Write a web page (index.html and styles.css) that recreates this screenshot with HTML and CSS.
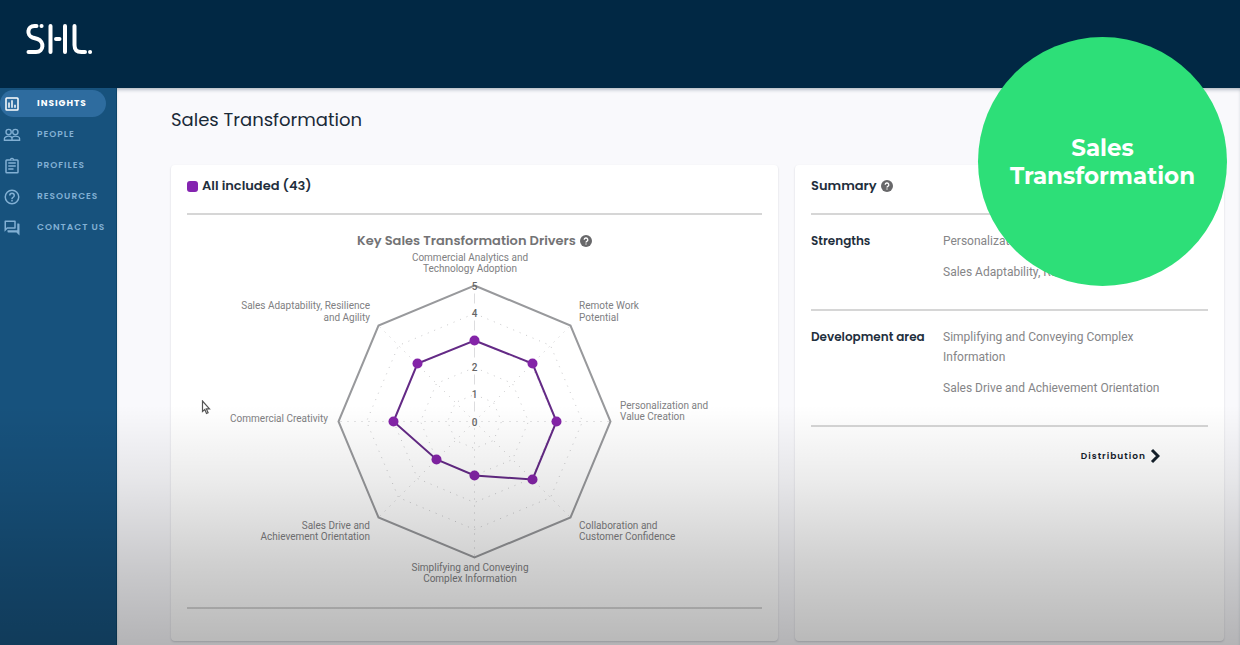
FILE: index.html
```html
<!DOCTYPE html>
<html lang="en">

<head>
    <meta charset="UTF-8">
    <meta name="viewport" content="width=device-width, initial-scale=1.0">
    <title>Sales Transformation</title>
    <link rel="stylesheet" href="styles.css">
</head>

<body>
    <header class="topbar">
        <a href="#" class="logo" aria-label="SHL">
            <svg width="68" height="30" viewBox="0 0 68 30">
                <g fill="none" stroke="#fff" stroke-width="4" stroke-linecap="round" stroke-linejoin="round">
                    <path d="M11.500 2H9.500C2 2 1.500 11.500 7.500 13.500l5 1.500C19.500 17.500 19 28 11 28H3.500M16.500 2h.1" />
                    <path d="M25.500 2v26M40 2v26M31 15h3.500M49.500 2v19c0 5 2 7 7 7h3.500M65 28h.1" />
                </g>
            </svg>
        </a>
    </header>

    <div class="layout">
        <!-- Side menu -->
        <nav class="sidebar">
            <a href="#" class="nav-item active">
                <svg class="icon" viewBox="0 0 24 24"><path d="M9 17H7v-7h2v7zm4 0h-2V7h2v10zm4 0h-2v-4h2v4zm2 2H5V5h14v14zm0-16H5a2 2 0 0 0-2 2v14a2 2 0 0 0 2 2h14a2 2 0 0 0 2-2V5a2 2 0 0 0-2-2z" /></svg>
                Insights
            </a>
            <a href="#" class="nav-item">
                <svg class="icon" viewBox="0 0 24 24"><g fill="none" stroke="currentColor" stroke-width="1.800"><circle cx="7.500" cy="8" r="3.500" /><circle cx="16.500" cy="8" r="3.500" /><path d="M1.900 19v-2.200c0-2 3-3.300 5.600-3.300s4.500 1.300 4.500 3.300V19zM12 16.800c0-2 2-3.300 4.500-3.300s5.600 1.300 5.600 3.300V19H12" /></g></svg>
                People
            </a>
            <a href="#" class="nav-item">
                <svg class="icon" viewBox="0 0 24 24"><path d="M7 15h7v2H7zm0-4h10v2H7zm0-4h10v2H7zm12-4h-4.200a3 3 0 0 0-5.600 0H5a2 2 0 0 0-2 2v15a2 2 0 0 0 2 2h14a2 2 0 0 0 2-2V5a2 2 0 0 0-2-2zm-7-.3a.8.8 0 1 1 0 1.600.8.8 0 0 1 0-1.600zM19 20H5V5h14v15z" /></svg>
                Profiles
            </a>
            <a href="#" class="nav-item">
                <svg class="icon" viewBox="0 0 24 24"><path d="M11 18h2v-2h-2v2zm1-16a10 10 0 1 0 0 20 10 10 0 0 0 0-20zm0 18a8 8 0 1 1 0-16 8 8 0 0 1 0 16zm0-14a4 4 0 0 0-4 4h2a2 2 0 1 1 4 0c0 2-3 1.750-3 5h2c0-2.250 3-2.500 3-5a4 4 0 0 0-4-4z" /></svg>
                Resources
            </a>
            <a href="#" class="nav-item">
                <svg class="icon" viewBox="0 0 24 24"><path d="M15 4v7H5.170L4 12.170V4h11m1-2H3a1 1 0 0 0-1 1v14l4-4h10a1 1 0 0 0 1-1V3a1 1 0 0 0-1-1zm5 4h-2v9H6v2a1 1 0 0 0 1 1h11l4 4V7a1 1 0 0 0-1-1z" /></svg>
                Contact us
            </a>
        </nav>

        <main class="content">
            <h1>Sales Transformation</h1>

            <div class="cards">
                <!-- Radar chart -->
                <section class="card">
                    <h2 class="card-head"><span class="swatch"></span>All included (43)</h2>
                    <div class="chart">
                        <h3>Key Sales Transformation Drivers
                            <svg class="help" viewBox="0 0 12 12"><circle cx="6" cy="6" r="6" /><path d="M4.200 4.800a1.800 1.800 0 1 1 2.600 1.600q-.8.400-.8 1M6 8.600v1" /></svg>
                        </h3>
                        <svg class="radar" viewBox="0 0 575 340" role="img" aria-label="Key Sales Transformation Drivers">
                            <g transform="translate(287.500 171.500)">
                                <g class="grid">
                                    <path d="M0-27 19-19 27 0 19 19 0 27-19 19-27 0-19-19Z" />
                                    <path d="M0-54 38-38 54 0 38 38 0 54-38 38-54 0-38-38Z" />
                                    <path d="M0-81 57-57 81 0 57 57 0 81-57 57-81 0-57-57Z" />
                                    <path d="M0-108 76-76 108 0 76 76 0 108-76 76-108 0-76-76Z" />
                                    <path d="M0 0V135M0 0H135M0 0H-135M0 0 96 96M0 0-96 96M0 0 96-96M0 0-96-96" />
                                </g>
                                <path class="axis" d="M0-10V-20M0-37V-47M0-64V-74M0-91V-101M0-118V-128" />
                                <path class="outline" d="M0-136 96-96 136 0 96 96 0 136-96 96-136 0-96-96Z" />
                                <g class="ticks">
                                    <text y="-132">5</text>
                                    <text y="-105">4</text>
                                    <text y="-51">2</text>
                                    <text y="-24">1</text>
                                    <text y="4">0</text>
                                </g>
                                <path class="series" d="M0-81 58-58 82 0 58 58 0 54-38 38-81 0-57-58Z" />
                                <g class="dots">
                                    <circle cy="-81" r="5" />
                                    <circle cx="58" cy="-58" r="5" />
                                    <circle cx="82" r="5" />
                                    <circle cx="58" cy="58" r="5" />
                                    <circle cy="54" r="5" />
                                    <circle cx="-38" cy="38" r="5" />
                                    <circle cx="-81" r="5" />
                                    <circle cx="-57" cy="-58" r="5" />
                                </g>
                            </g>
                            <g class="labels">
                                <text class="mid"><tspan x="283" y="11">Commercial Analytics and</tspan><tspan x="283" y="22">Technology Adoption</tspan></text>
                                <text><tspan x="392" y="59">Remote Work</tspan><tspan x="392" y="71">Potential</tspan></text>
                                <text><tspan x="433" y="159">Personalization and</tspan><tspan x="433" y="170">Value Creation</tspan></text>
                                <text><tspan x="392" y="279">Collaboration and</tspan><tspan x="392" y="290">Customer Confidence</tspan></text>
                                <text class="mid"><tspan x="283" y="321">Simplifying and Conveying</tspan><tspan x="283" y="332">Complex Information</tspan></text>
                                <text class="end"><tspan x="183" y="279">Sales Drive and</tspan><tspan x="183" y="290">Achievement Orientation</tspan></text>
                                <text class="end" x="141" y="172">Commercial Creativity</text>
                                <text class="end"><tspan x="183" y="59">Sales Adaptability, Resilience</tspan><tspan x="183" y="71">and Agility</tspan></text>
                            </g>
                        </svg>
                    </div>
                </section>

                <!-- Summary -->
                <section class="card">
                    <h2 class="card-head">Summary
                        <svg class="help" viewBox="0 0 12 12"><circle cx="6" cy="6" r="6" /><path d="M4.200 4.800a1.800 1.800 0 1 1 2.600 1.600q-.8.400-.8 1M6 8.600v1" /></svg>
                    </h2>
                    <div class="row">
                        <h4>Strengths</h4>
                        <ul>
                            <li>Personalization and Value Creation</li>
                            <li>Sales Adaptability, Resilience</li>
                        </ul>
                    </div>
                    <div class="row">
                        <h4>Development area</h4>
                        <ul>
                            <li>Simplifying and Conveying Complex Information</li>
                            <li>Sales Drive and Achievement Orientation</li>
                        </ul>
                    </div>
                    <a href="#" class="more">Distribution
                        <svg width="10" height="16" viewBox="0 0 10 16"><path d="M2 2l6 6-6 6" fill="none" stroke="#14202b" stroke-width="3" /></svg>
                    </a>
                </section>
            </div>
        </main>
    </div>

    <div class="shade"></div>
    <div class="bubble">Sales<br>Transformation</div>
    <svg class="cursor" width="10" height="15" viewBox="0 0 10 15"><path d="M1.500 1v10.500l2.300-2 1.700 4 1.600-.7-1.700-3.900h3.100z" fill="#fff" stroke="#555" stroke-width="1.200" /></svg>
</body>

</html>
```
FILE: styles.css
```css
* {
    box-sizing: border-box;
}

body {
    margin: 0;
    min-height: 100vh;
    display: flex;
    flex-direction: column;
    position: relative;
    font-family: Roboto, sans-serif;
    font-size: 12px;
    color: #858587;
    background: #f9f9fc;
}

h1,
h2,
h3,
h4,
ul {
    margin: 0;
    padding: 0;
    font-family: Poppins, Inter, sans-serif;
}

a {
    color: inherit;
    text-decoration: none;
}

.topbar {
    height: 88px;
    padding: 24px 25px;
    background: #012844;
}

.logo svg {
    display: block;
}

.layout {
    flex: 1;
    display: flex;
}

/* Side menu */
.sidebar {
    width: 117px;
    padding-top: 2px;
    display: flex;
    flex-direction: column;
    gap: 4px;
    background: #17527d;
    border-right: 1px solid #0d4569;
}

.nav-item {
    display: flex;
    align-items: center;
    gap: 16px;
    width: 106px;
    height: 27px;
    padding-left: 3px;
    border-radius: 14px;
    font: 600 9px Poppins, Inter, sans-serif;
    letter-spacing: 1px;
    text-transform: uppercase;
    white-space: nowrap;
    color: #82b0d4;
}

.nav-item.active {
    background: #2e6c9f;
    font-weight: 700;
    color: #fff;
}

.icon {
    width: 18px;
    height: 18px;
    flex: none;
    fill: currentColor;
}

/* Content */
.content {
    flex: 1;
    display: flex;
    flex-direction: column;
    padding: 18px 16px 4px 54px;
    box-shadow: inset 0 3px 4px -2px #9aa3ae;
}

h1 {
    margin-bottom: 31px;
    font-size: 18px;
    line-height: 28px;
    font-weight: 400;
    color: #1a2a38;
}

.cards {
    flex: 1;
    display: grid;
    grid-template-columns: 607fr 429fr;
    gap: 17px;
}

.card {
    padding: 0 16px;
    background: #fff;
    border-radius: 4px;
    box-shadow: 0 1px 2px rgba(40, 50, 70, .2);
}

.card-head {
    display: flex;
    align-items: center;
    gap: 4px;
    height: 50px;
    padding-bottom: 6px;
    border-bottom: 2px solid #d6d6d6;
    font-size: 13px;
    font-weight: 600;
    color: #1f2f3d;
}

.swatch {
    width: 11px;
    height: 11px;
    border-radius: 3px;
    background: #8424b0;
}

.help {
    width: 12px;
    height: 12px;
    fill: #68686a;
}

.help path {
    fill: none;
    stroke: #fff;
    stroke-width: 1.3;
}

.chart {
    padding-bottom: 17px;
    border-bottom: 2px solid #d6d6d6;
}

h3 {
    display: flex;
    justify-content: center;
    align-items: center;
    gap: 4px;
    height: 35px;
    padding-top: 17px;
    font-size: 13px;
    font-weight: 600;
    color: #737375;
}

.radar {
    display: block;
    width: 100%;
}

.grid {
    fill: none;
    stroke: #c9c9cb;
    stroke-dasharray: 1 6;
}

.axis {
    stroke: #dcdcde;
}

.outline {
    fill: none;
    stroke: #98999c;
    stroke-width: 2;
}

.ticks {
    font-size: 10px;
    font-weight: 500;
    text-anchor: middle;
    fill: #666;
}

.series {
    fill: none;
    stroke: #642a86;
    stroke-width: 2;
}

.dots {
    fill: #8424a8;
}

.labels {
    font-size: 10px;
    fill: #808082;
}

.mid {
    text-anchor: middle;
}

.end {
    text-anchor: end;
}

/* Summary */
.row {
    display: flex;
    padding: 16px 32px 27px 0;
    border-bottom: 2px solid #d6d6d6;
    line-height: 20px;
}

.row h4 {
    width: 132px;
    flex: none;
    font-size: 12px;
    font-weight: 600;
    color: #1f2f3d;
}

.row ul {
    list-style: none;
    font-family: Roboto, sans-serif;
}

.row li + li {
    margin-top: 11px;
}

.more {
    display: flex;
    justify-content: flex-end;
    align-items: center;
    gap: 4px;
    padding: 21px 48px 0 0;
    font: 600 9px Poppins, Inter, sans-serif;
    letter-spacing: 1px;
    color: #14202b;
}

/* Over the page */
.shade {
    position: absolute;
    left: 0;
    right: 0;
    bottom: 0;
    height: 240px;
    background: linear-gradient(rgba(0, 0, 0, 0), rgba(0, 0, 0, .08) 32%, rgba(0, 0, 0, .19) 67%, rgba(0, 0, 0, .28));
    pointer-events: none;
}

.bubble {
    position: absolute;
    top: 37px;
    right: 13px;
    display: flex;
    align-items: center;
    justify-content: center;
    width: 249px;
    height: 249px;
    border-radius: 50%;
    background: #2ddf78;
    color: #fff;
    font: 700 23px/28px Montserrat, Inter, sans-serif;
    text-align: center;
}

.cursor {
    position: absolute;
    left: 201px;
    top: 400px;
}
```
